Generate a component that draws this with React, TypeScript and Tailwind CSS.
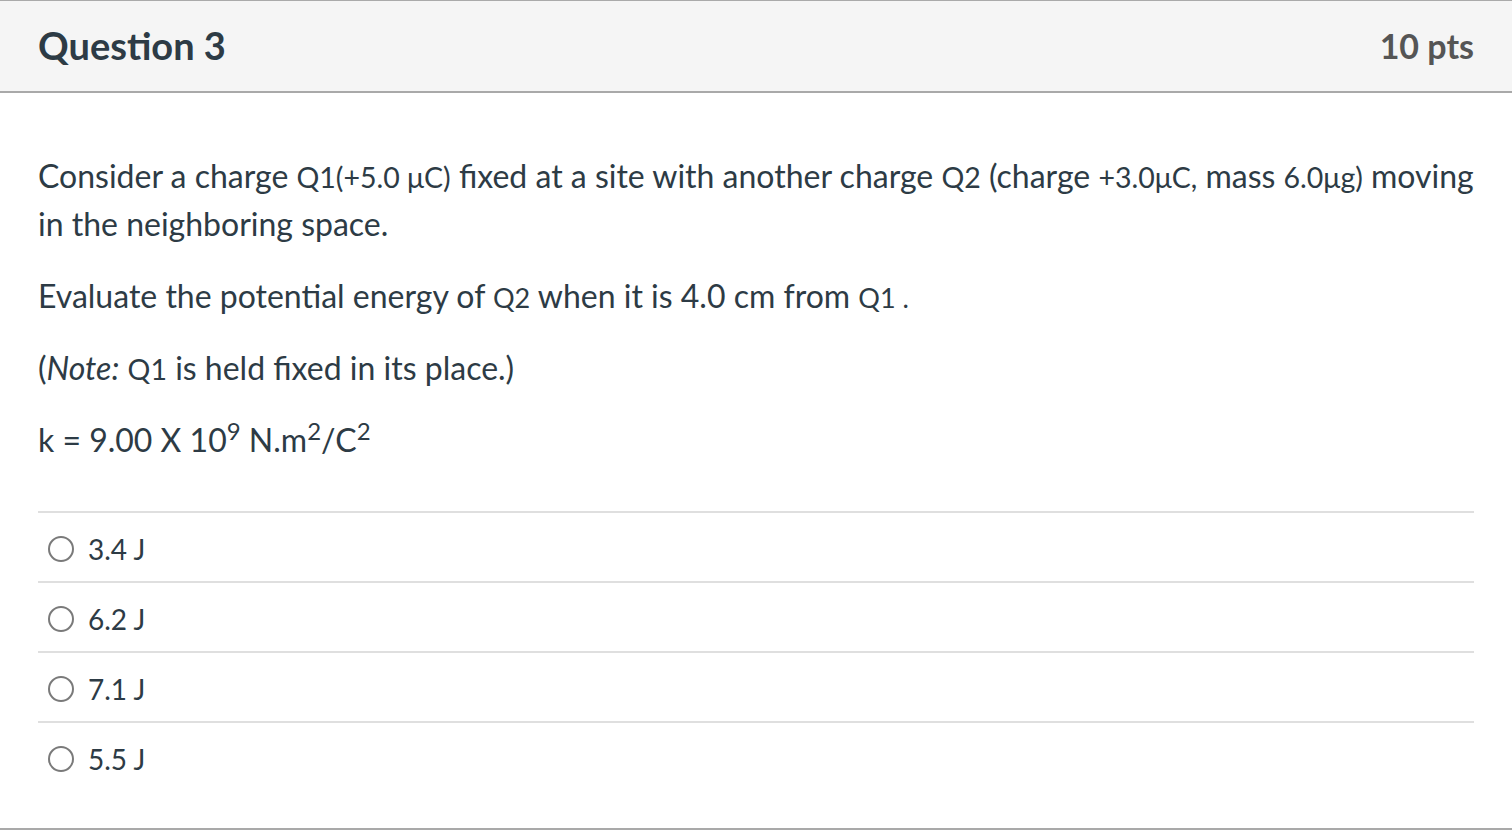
import React from 'react';

const answers = ['3.4 J', '6.2 J', '7.1 J', '5.5 J'];

// smaller inline runs pasted into the question text
const Small = ({ children, size = 'text-[28.5px]' }: { children: React.ReactNode; size?: string }) => (
  <span className={`${size} leading-none`}>{children}</span>
);

const Sup = ({ children }: { children: React.ReactNode }) => <sup className="leading-none">{children}</sup>;

const App: React.FC = () => {
  return (
    <div className="min-h-screen bg-white text-[#2d3b45]" style={{ fontFamily: 'Lato, "Noto Sans", sans-serif' }}>
      <div className="border-t border-b-2 border-[#aaaaaa] border-b-[#a9a9a9] bg-[#f5f5f5] h-[93px] px-[38px] flex items-center justify-between">
        <h2 className="text-[38px] font-bold pb-[2px]">Question 3</h2>
        <div className="text-[34px] font-bold text-[#555555] pb-[2px]">10 pts</div>
      </div>

      <div className="px-[38px] pt-[59px] text-[32px] leading-[48px]">
        <p>
          Consider a charge <Small>Q1(+5.0 μC)</Small> fixed at a site with another charge <Small>Q2</Small> (charge{' '}
          <Small>+3.0μC,</Small> mass <Small>6.0μg)</Small> moving in the neighboring space.
        </p>
        <p className="mt-[24px]">
          Evaluate the potential energy of <Small size="text-[27px]">Q2</Small> when it is 4.0 cm from{' '}
          <Small size="text-[27px]">Q1 .</Small>
        </p>
        <p className="mt-[24px]">
          (<i>Note:</i> <Small>Q1</Small> is held fixed in its place.)
        </p>
        <p className="mt-[24px]">
          k = 9.00 X 10<Sup>9</Sup> N.m<Sup>2</Sup>/C<Sup>2</Sup>
        </p>
      </div>

      <div className="mx-[38px] mt-[47px] pb-[37px]">
        {answers.map((a) => (
          <div key={a} className="border-t-2 border-[#dfdfdf] h-[70px] flex items-center gap-[14px] pl-[10px] pt-[4px]">
            <span className="w-[26px] h-[26px] rounded-full border-2 border-[#7a7a7a] bg-white" />
            <span className="text-[28px]">{a}</span>
          </div>
        ))}
      </div>
      <div className="border-t-2 border-[#a9a9a9]" />
    </div>
  );
};

export default App;
